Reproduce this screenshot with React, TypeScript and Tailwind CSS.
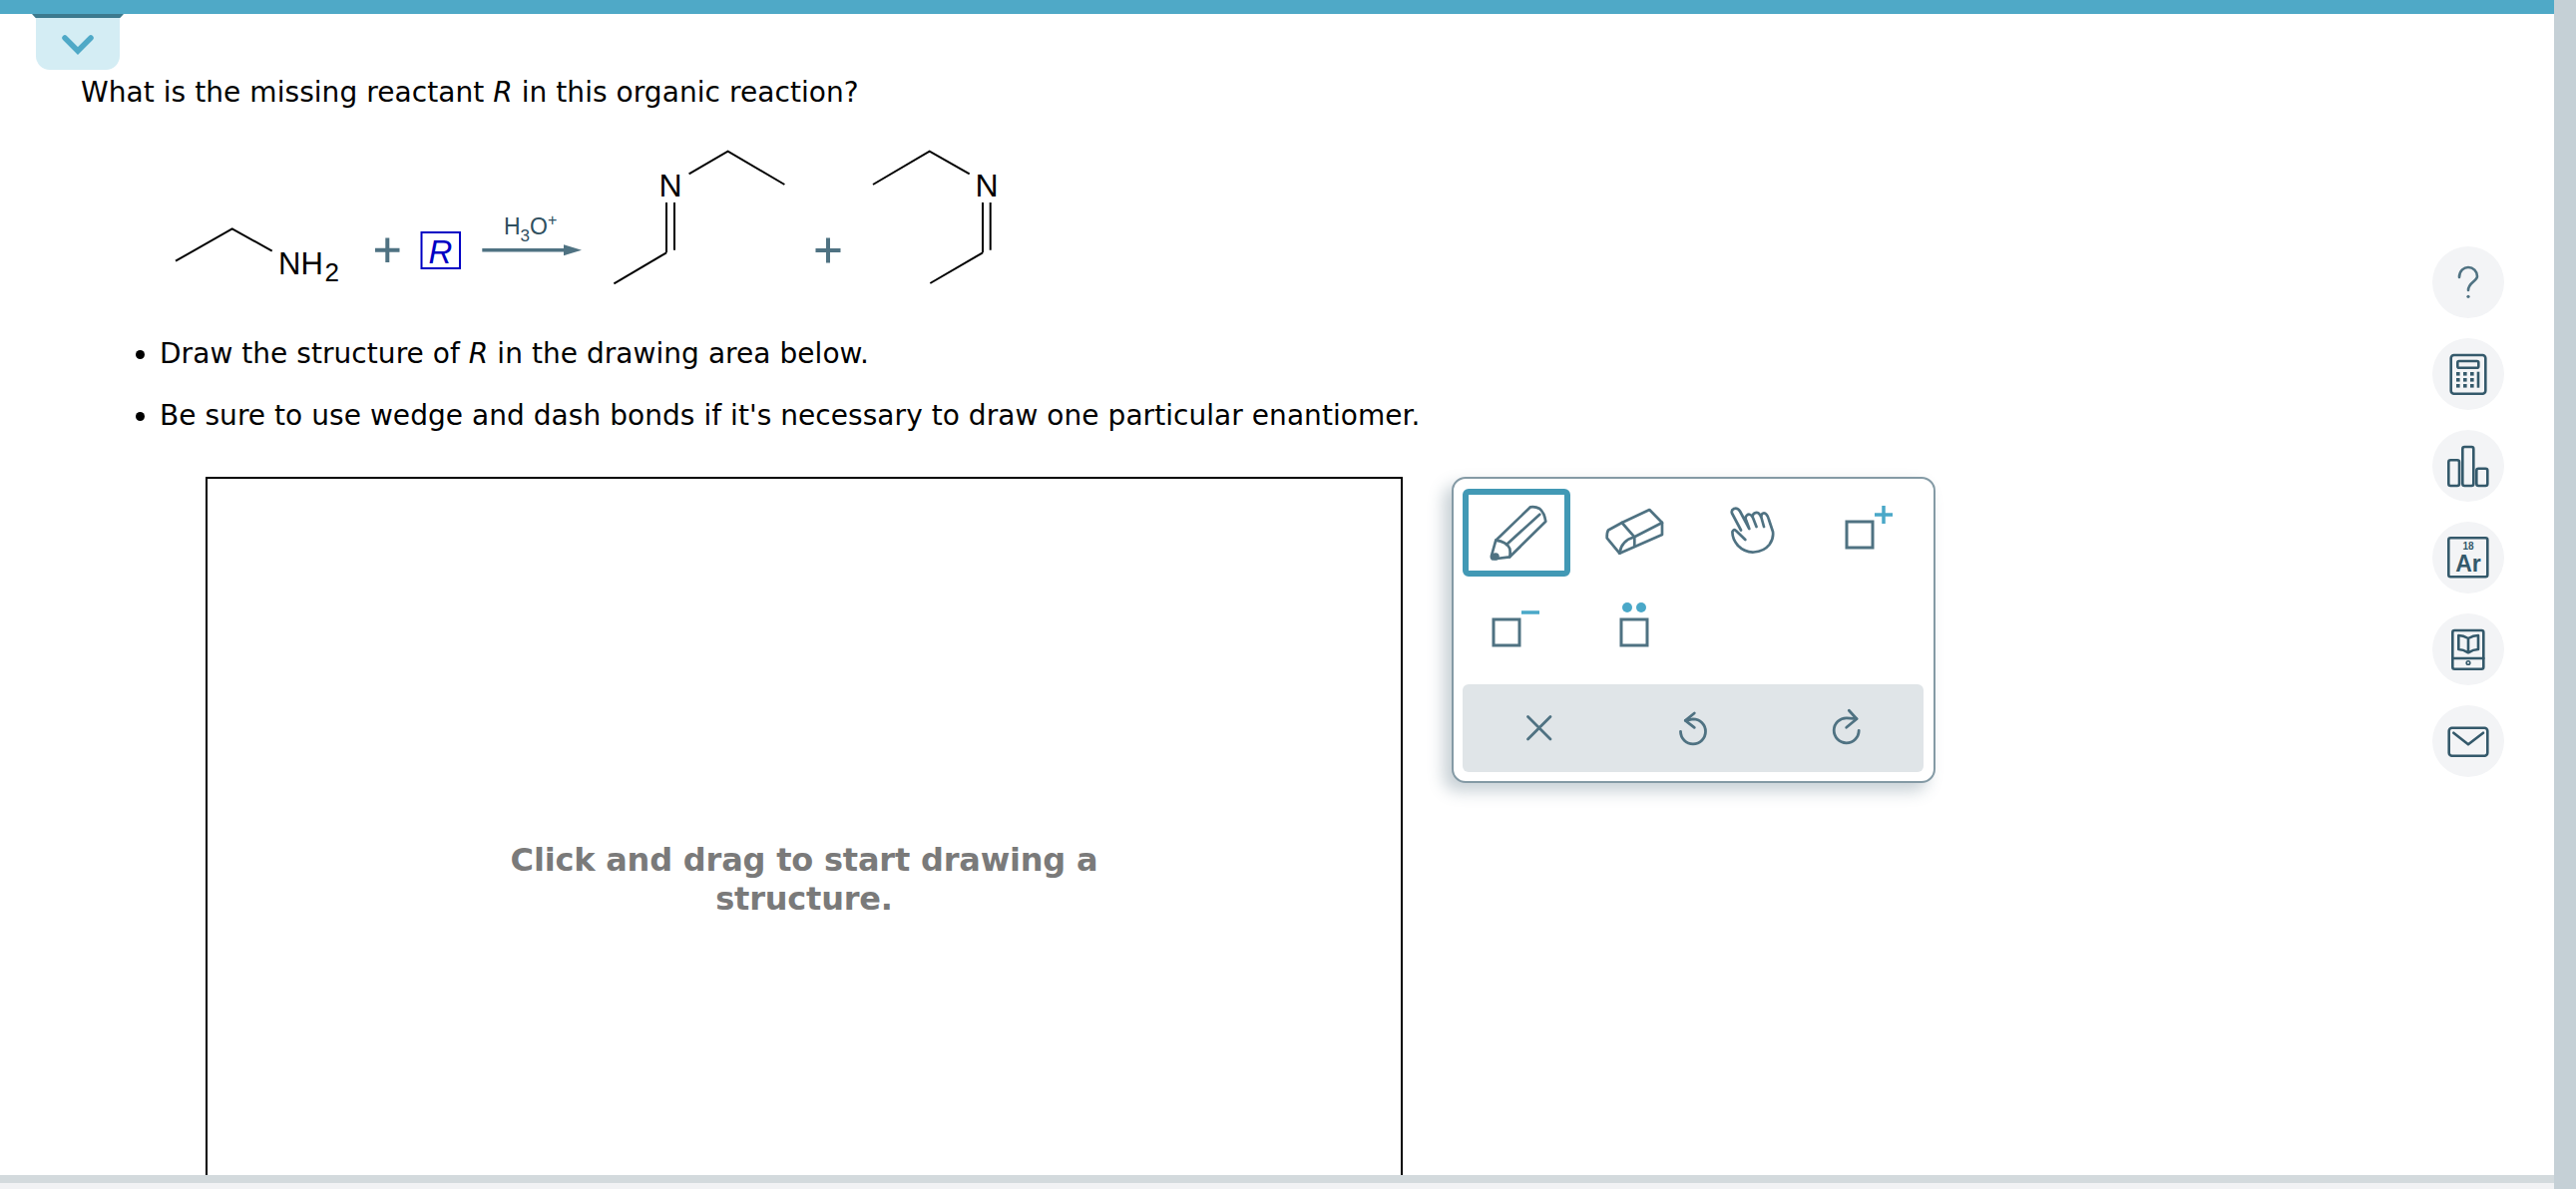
import React from "react";

const slate = "#4f7282";
const dark = "#34596b";
const blue = "#4aa8c8";

function Cell({ children, active }: { children: React.ReactNode; active?: boolean }) {
  return (
    <div className={"h-[88px] w-[108px] rounded-[6px] " + (active ? "border-[6px] border-[#4299b5]" : "")}>
      <svg
        viewBox={active ? "6 6 96 76" : "0 0 108 88"}
        className={active ? "block h-[76px] w-[96px]" : "block h-[88px] w-[108px]"}
        fill="none"
        stroke={slate}
        strokeWidth="2.7"
        strokeLinecap="round"
        strokeLinejoin="round"
      >
        {children}
      </svg>
    </div>
  );
}

function PanelButton({ children }: { children: React.ReactNode }) {
  return (
    <svg viewBox="0 0 154 88" className="block h-[88px] w-[154px]" fill="none" stroke={slate} strokeWidth="2.8" strokeLinecap="round" strokeLinejoin="round">
      {children}
    </svg>
  );
}

function Side({ children }: { children: React.ReactNode }) {
  return (
    <div className="h-[72px] w-[72px] rounded-full bg-[#f3f4f6]">
      <svg viewBox="-36 -36 72 72" className="block h-[72px] w-[72px]" fill="none" stroke={dark} strokeWidth="2.6" strokeLinecap="round" strokeLinejoin="round">
        {children}
      </svg>
    </div>
  );
}

function Reaction() {
  const bond = { stroke: "#000", strokeWidth: 2, fill: "none" };
  const arial = { fontFamily: "'Liberation Sans', Arial, sans-serif" };
  return (
    <svg viewBox="81 130 960 170" className="block h-[170px] w-[960px]">
      <polyline points="176,261.7 232.7,229.3 272.7,251.7" {...bond} />
      <text x="279" y="274.5" fontSize="31" fill="#000" style={arial}>NH</text>
      <text x="325.5" y="282" fontSize="26" fill="#000" style={arial}>2</text>
      <path d="M376 250.7H400.5M388.3 238.5V263" stroke={slate} strokeWidth="4" />
      <rect x="422.5" y="233" width="38.5" height="36" fill="none" stroke="#0000c4" strokeWidth="2" />
      <text x="441.5" y="263.5" textAnchor="middle" fontSize="33" fontStyle="italic" fill="#0000c4" style={arial}>R</text>
      <text x="505" y="234.5" fontSize="23" fill="#2f4f5f" style={arial}>H</text>
      <text x="521.5" y="242" fontSize="17" fill="#2f4f5f" style={arial}>3</text>
      <text x="531" y="234.5" fontSize="23" fill="#2f4f5f" style={arial}>O</text>
      <text x="549" y="226" fontSize="16" fill="#2f4f5f" style={arial}>+</text>
      <path d="M483.3 250.7H566" stroke={slate} strokeWidth="3.4" />
      <path d="M565 245.2L583 250.7L565 256.2Z" fill={slate} />
      <text x="672" y="197" textAnchor="middle" fontSize="32" fill="#000" style={arial}>N</text>
      <path d="M668 203V253.3M676 203V250.7" {...bond} />
      <polyline points="668,253.3 615.4,284.3" {...bond} />
      <polyline points="690.6,174.3 729.6,151.7 786.4,185" {...bond} />
      <path d="M817.5 251H842.5M830 238.5V263.5" stroke={slate} strokeWidth="4" />
      <polyline points="875,185 931.7,151.7 971.7,174.3" {...bond} />
      <text x="989" y="197" textAnchor="middle" fontSize="32" fill="#000" style={arial}>N</text>
      <path d="M985 203V253.3M992.7 203V250.7" {...bond} />
      <polyline points="985,253.3 932.3,284" {...bond} />
    </svg>
  );
}

export default function App() {
  return (
    <div className="flex h-[1192px] w-full overflow-hidden bg-white text-black" style={{ fontFamily: "'DejaVu Sans', Verdana, sans-serif" }}>
      <div className="flex w-[2560px] flex-col">
        <div className="h-[14px] shrink-0 bg-[#4fa9c7]" />
        <div className="relative flex min-h-0 flex-1 overflow-hidden">
          <div className="absolute left-[36px] top-0 flex h-[56px] w-[84px] items-center justify-center rounded-b-[14px] bg-[#d4edf4]">
            <svg viewBox="0 0 32 20" className="mt-[5px] h-[20px] w-[32px]" fill="none" stroke="#4fa9c7" strokeWidth="5.5" strokeLinecap="round" strokeLinejoin="miter">
              <path d="M3 3L16 16L29 3" />
            </svg>
          </div>
          <div className="absolute left-[32px] top-0 h-[4px] w-[92px] bg-[#3c7a8e] [clip-path:polygon(0_0,100%_0,96%_100%,4%_100%)]" />

          <div className="min-w-0 flex-1 pl-[81px]">
            <p className="pt-[63px] text-[28px] leading-[32px] tracking-[0.06px]">
              What is the missing reactant <i>R</i> in this organic reaction?
            </p>
            <div className="mt-[21px]">
              <Reaction />
            </div>
            <ul className="mt-[39px] list-disc pl-[79px] text-[28px] leading-[32px] tracking-[0.05px]">
              <li>
                Draw the structure of <i>R</i> in the drawing area below.
              </li>
              <li className="mt-[30px]">Be sure to use wedge and dash bonds if it's necessary to draw one particular enantiomer.</li>
            </ul>
            <div className="ml-[125px] mt-[45px] flex items-start">
              <div className="flex h-[800px] w-[1200px] shrink-0 items-center justify-center border-2 border-black pt-[8px]">
                <p className="w-[640px] text-center text-[32px] font-bold leading-[39px] tracking-[-0.2px] text-[#7a7a7a]">
                  Click and drag to start drawing a structure.
                </p>
              </div>
              <div className="ml-[49px] w-[485px] rounded-[14px] border-2 border-[#849aa5] bg-white px-[9px] pb-[9px] pt-[10px] shadow-[-8px_8px_16px_rgba(80,110,125,0.32)]">
                <div className="grid grid-cols-[repeat(4,108px)] gap-x-[10px] gap-y-[8px]">
                  <Cell active>
                    <path d="M33.3 51.7L68 18.3Q73 17.5 77.3 20Q82 24 83.3 32.7L47.3 68.3L30 70.5Q28.5 69.5 29 67Z" />
                    <path d="M33.3 51.7Q44 53 47.3 60Q48 64 47.3 68.3M44 56L77.3 25.7" />
                    <circle cx="33" cy="68" r="3.8" fill={slate} stroke="none" />
                  </Cell>
                  <Cell>
                    <path d="M41.7 34L69.3 21L82 34V46L39.3 64.7L26.7 49.3Q26.5 44 28 41.5Z" />
                    <path d="M41.7 34L54.3 48.3L82 34M54.3 48.3V57.7M39.3 64.7Q41 52 54.3 48.3" />
                  </Cell>
                  <Cell>
                    <path d="M47.3 51L38 42Q35.5 40 34.5 43Q34 50 40 57Q47 64 56 63.5Q66 63 71.5 56Q76 50 75 43L71 31Q69 24 65.5 24.5Q63 25 63.5 29L66 38M63.5 29Q61 22 56.5 24.5Q54 26 55 29L58.5 38M55 29Q52 24 49 26.5Q47 28 48 31L51.3 40L42 22.5Q39.5 18.5 36 20Q33 21.5 34 24.5L43 41.5" />
                  </Cell>
                  <Cell>
                    <rect x="31" y="33" width="26" height="26" strokeLinecap="butt" strokeLinejoin="miter" strokeWidth="3" />
                    <path d="M59 26H77M68 17V35" stroke={blue} strokeWidth="3.5" strokeLinecap="butt" />
                  </Cell>
                  <Cell>
                    <rect x="31" y="35" width="26" height="26" strokeLinecap="butt" strokeLinejoin="miter" strokeWidth="3" />
                    <path d="M59 28H77" stroke={blue} strokeWidth="3.5" strokeLinecap="butt" />
                  </Cell>
                  <Cell>
                    <rect x="41" y="35" width="26" height="26" strokeLinecap="butt" strokeLinejoin="miter" strokeWidth="3" />
                    <circle cx="47" cy="23" r="5" fill={blue} stroke="none" />
                    <circle cx="61" cy="23" r="5" fill={blue} stroke="none" />
                  </Cell>
                </div>
                <div className="mt-[12px] flex w-[462px] rounded-[6px] bg-[#e0e5e8]">
                  <PanelButton>
                    <path d="M65.5 32.5L88 55M88 32.5L65.5 55" />
                  </PanelButton>
                  <PanelButton>
                    <path d="M78.3 29L69.3 36.3L78.3 43.3" />
                    <path d="M69.3 36.3L77 34.8A12.5 12.5 0 1 1 64.5 47.3" />
                  </PanelButton>
                  <PanelButton>
                    <path d="M79.3 26.3L87 34.7L76.7 43.3" />
                    <path d="M87 34.7L77 33.8A12.5 12.5 0 1 0 89.2 46.3" />
                  </PanelButton>
                </div>
              </div>
            </div>
          </div>

          <div className="flex w-[122px] shrink-0 flex-col gap-[20px] pt-[233px]">
            <Side>
              <path d="M-9 -5C-9 -12 -4 -15 0 -15C5 -15 9 -11 9 -6C9 -1 0 0 0 8" stroke={slate} />
              <circle cx="0" cy="14.3" r="1.6" fill={slate} stroke="none" />
            </Side>
            <Side>
              <rect x="-17.3" y="-19" width="34.6" height="38.7" rx="3" />
              <rect x="-10.7" y="-13" width="21" height="6.7" rx="1.5" />
              <path d="M10 -2.3V13.7" strokeLinecap="butt" />
              <g fill={dark} stroke="none">
                <rect x="-12" y="-2" width="3.6" height="3.6" />
                <rect x="-5" y="-2" width="3.6" height="3.6" />
                <rect x="2" y="-2" width="3.6" height="3.6" />
                <rect x="-12" y="4" width="3.6" height="3.6" />
                <rect x="-5" y="4" width="3.6" height="3.6" />
                <rect x="2" y="4" width="3.6" height="3.6" />
                <rect x="-12" y="10" width="3.6" height="3.6" />
                <rect x="-5" y="10" width="3.6" height="3.6" />
                <rect x="2" y="10" width="3.6" height="3.6" />
              </g>
            </Side>
            <Side>
              <rect x="-19.7" y="-5.7" width="10.7" height="25.7" rx="2" />
              <rect x="-5.7" y="-19" width="11" height="39" rx="2" />
              <rect x="8.3" y="2.7" width="11" height="17.3" rx="2" />
            </Side>
            <Side>
              <rect x="-19.7" y="-19.7" width="39" height="39" rx="2" />
              <text x="0" y="-8" textAnchor="middle" fontSize="10" fontWeight="700" fill={dark} stroke="none" style={{ fontFamily: "'Liberation Sans', Arial, sans-serif" }}>18</text>
              <text x="0" y="14" textAnchor="middle" fontSize="23" fontWeight="700" fill={dark} stroke="none" style={{ fontFamily: "'Liberation Sans', Arial, sans-serif" }}>Ar</text>
            </Side>
            <Side>
              <rect x="-15.7" y="-19" width="31" height="38.7" rx="2" />
              <path d="M-15.7 9H15.3" />
              <circle cx="0" cy="13.5" r="1.8" strokeWidth="1.6" />
              <path d="M0 -11Q-5 -14 -9.7 -14V0Q-5 0 0 3.3Q5 0 10 0V-14Q5 -14 0 -11ZM0 -11V3.3" />
            </Side>
            <Side>
              <rect x="-19.3" y="-13.3" width="38.6" height="28" rx="3" />
              <path d="M-14.7 -8.3L0 3.3L15 -8.3" />
            </Side>
          </div>
        </div>
        <div className="h-[8px] shrink-0 bg-[#d3dadd]" />
        <div className="h-[6px] shrink-0 bg-[#f1f2f4]" />
      </div>
      <div className="w-[22px] shrink-0 bg-[#c5d0d6]" />
    </div>
  );
}
